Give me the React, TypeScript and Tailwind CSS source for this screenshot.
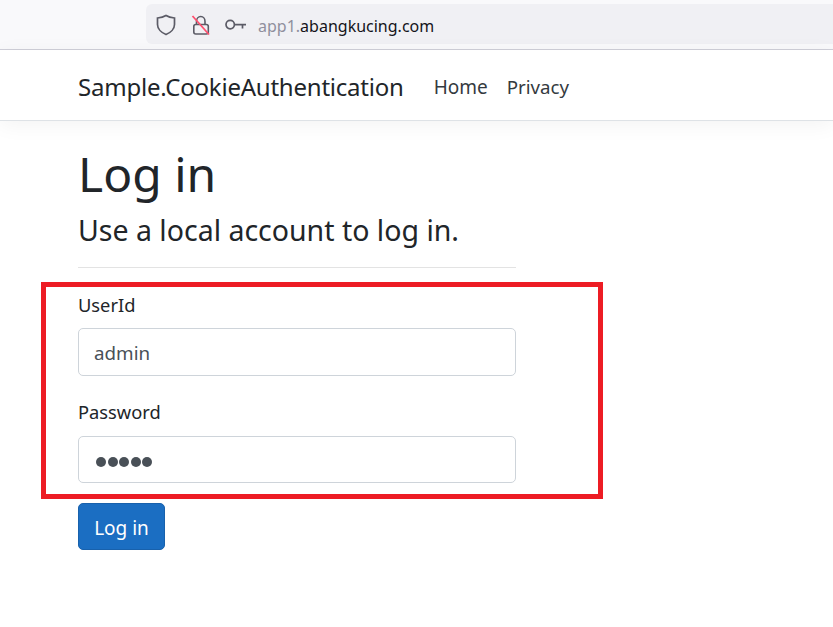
export default function App() {
  return (
    <div className="relative min-h-[627px] bg-white text-[#212529] font-['Noto_Sans',sans-serif] overflow-hidden">
      <div className="h-[50px] bg-[#f9f9fb] border-b border-[#cfcfd8] pl-[146px] pt-1">
        <div className="h-10 bg-[#f0f0f4] rounded-l-md flex items-center pl-[10px] pt-[2px]">
          <svg width="20" height="22" viewBox="0 0 20 22" fill="none" stroke="#5b5b66" strokeWidth="1.7">
            <path d="M10 1.5 C7.5 3.2 5 3.8 1.5 4 V10.5 C1.5 15 5.5 18.8 10 20.5 C14.5 18.8 18.5 15 18.5 10.5 V4 C15 3.8 12.5 3.2 10 1.5 Z" />
          </svg>
          <svg className="ml-[15px]" width="20" height="22" viewBox="0 0 20 22" fill="none">
            <path d="M5.5 11 V7.5 C5.5 4.8 7.3 2.5 9.8 2.5 C12.3 2.5 14 4.8 14 7.5 V11" stroke="#5b5b66" strokeWidth="1.6" />
            <rect x="2.8" y="10.5" width="14.5" height="9.5" rx="2" stroke="#5b5b66" strokeWidth="1.6" />
            <path d="M1.5 2 L18 20.5" stroke="#ff4f6e" strokeWidth="1.8" />
          </svg>
          <svg className="ml-[14px]" width="22" height="12" viewBox="0 0 22 12" fill="none" stroke="#5b5b66" strokeWidth="1.7">
            <circle cx="5.2" cy="5.6" r="4.2" />
            <path d="M9.4 5.6 H21 M17.5 5.6 V9.5" />
          </svg>
          <span className="ml-[11px] mt-[2px] text-[16px] text-[#8f8f9d]">
            app1.<span className="text-[#15141a]">abangkucing.com</span>
          </span>
        </div>
      </div>

      <nav className="h-[71px] border-b border-[#dee2e6] shadow-[0_4px_20px_rgba(0,0,0,0.05)] flex items-center pl-[78px] pt-[4px]">
        <span className="text-[24px] tracking-[-0.22px] text-[#212529]">Sample.CookieAuthentication</span>
        <span className="ml-[30px] text-[19px] text-[#343a40]">Home</span>
        <span className="ml-[19px] text-[18.7px] text-[#343a40]">Privacy</span>
      </nav>

      <main className="pl-[78px] pt-[18px]">
        <h1 className="text-[48px] leading-[70px]">Log in</h1>
        <h2 className="text-[28.5px] leading-[38px] mt-[2px]">Use a local account to log in.</h2>
        <hr className="mt-[18px] w-[438px] border-[#e3e3e3]" />
        <form className="w-[438px] mt-[24px]">
          <label className="block text-[18.3px] leading-[26px]">UserId</label>
          <div className="mt-[10px] h-12 border border-[#ced4da] rounded-[5px] flex items-center pl-[15px] pt-[2px] text-[18.8px] text-[#495057]">
            admin
          </div>
          <label className="block mt-[23px] text-[18.3px] leading-[26px]">Password</label>
          <div className="mt-[11px] h-[47px] border border-[#ced4da] rounded-[5px] flex items-center gap-[1.5px] pl-[17px] pt-[4px]">
            <i className="size-[10px] rounded-full bg-[#495057]" />
            <i className="size-[10px] rounded-full bg-[#495057]" />
            <i className="size-[10px] rounded-full bg-[#495057]" />
            <i className="size-[10px] rounded-full bg-[#495057]" />
            <i className="size-[10px] rounded-full bg-[#495057]" />
          </div>
          <button type="button" className="mt-[20px] w-[87px] h-[47px] pt-[4px] bg-[#1b6ec2] border border-[#1861ac] rounded-[5px] text-white text-[19px]">
            Log in
          </button>
        </form>
      </main>

      <div className="absolute left-[41px] top-[282px] w-[562px] h-[217px] border-[5px] border-[#ed1c24]" />
    </div>
  );
}
